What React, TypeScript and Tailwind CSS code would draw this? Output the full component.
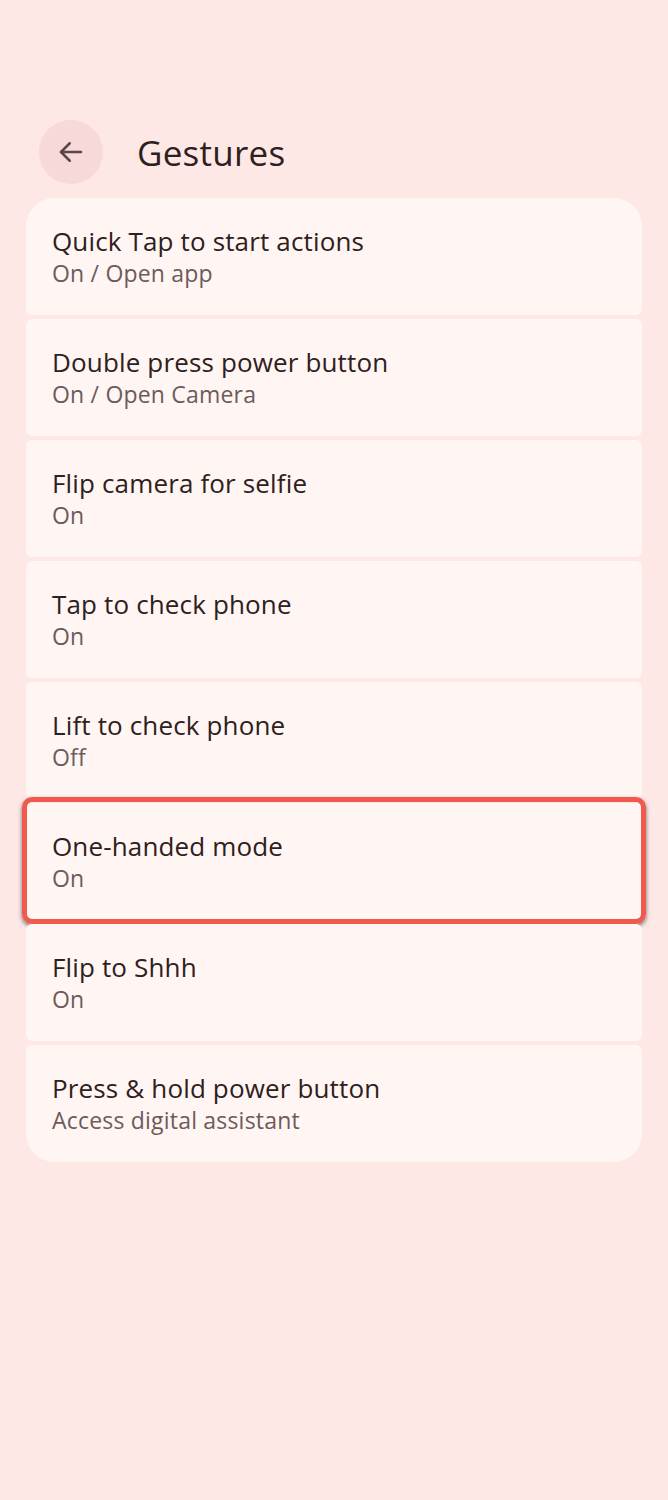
import { FC } from "react";

type Item = {
  title: string;
  summary: string;
  highlight?: boolean;
};

const items: Item[] = [
  { title: "Quick Tap to start actions", summary: "On / Open app" },
  { title: "Double press power button", summary: "On / Open Camera" },
  { title: "Flip camera for selfie", summary: "On" },
  { title: "Tap to check phone", summary: "On" },
  { title: "Lift to check phone", summary: "Off" },
  { title: "One-handed mode", summary: "On", highlight: true },
  { title: "Flip to Shhh", summary: "On" },
  { title: "Press & hold power button", summary: "Access digital assistant" },
];

const SettingRow: FC<{ item: Item; first: boolean; last: boolean }> = ({ item, first, last }) => {
  return (
    <div
      className={`relative h-[117px] bg-[#fff5f3] px-[26px] flex flex-col justify-center ${
        first ? "rounded-t-[28px] rounded-b-[6px]" : last ? "rounded-b-[28px] rounded-t-[6px]" : "rounded-[6px]"
      }`}
    >
      <div className="text-[26px] leading-[32px] tracking-[0.15px] text-[#2f2020] pb-[1px]">{item.title}</div>
      <div className="text-[23px] leading-[30px] tracking-[0.2px] text-[#6d5b5a]">{item.summary}</div>
      {item.highlight && (
        <div className="absolute -left-[4px] -right-[4px] -top-[6px] -bottom-[4px] rounded-[10px] border-[5px] border-[#f2594e] shadow-[0_2px_4px_rgba(0,0,0,0.55)]" />
      )}
    </div>
  );
};

const App: FC = () => {
  return (
    <div className="min-h-[1500px] w-[668px] bg-[#fde8e6] font-['Open_Sans',sans-serif]">
      <div className="pt-[120px] px-[39px] flex items-center gap-[34px] h-[184px]">
        <div className="w-[64px] h-[64px] rounded-full bg-[#f6d9d8] flex items-center justify-center">
          <svg width="30" height="30" viewBox="0 0 24 24" fill="none" stroke="#5a4646" strokeWidth="2" strokeLinecap="round" strokeLinejoin="round">
            <path d="M20 12H4" />
            <path d="M11 5l-7 7 7 7" />
          </svg>
        </div>
        <h1 className="text-[35px] tracking-[0.25px] text-[#2f2020] leading-none">Gestures</h1>
      </div>
      <div className="mx-[26px] mt-[14px] flex flex-col gap-[4px]">
        {items.map((item, i) => (
          <SettingRow key={item.title} item={item} first={i === 0} last={i === items.length - 1} />
        ))}
      </div>
    </div>
  );
};

export default App;
